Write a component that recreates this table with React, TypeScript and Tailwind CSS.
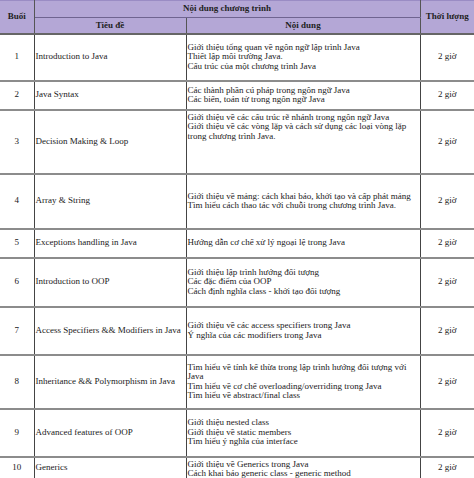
const lessons = [
  {
    no: '1',
    title: 'Introduction to Java',
    lines: [
      'Giới thiệu tổng quan về ngôn ngữ lập trình Java',
      'Thiết lập môi trường Java.',
      'Cấu trúc của một chương trình Java',
    ],
    h: 'h-[47px]',
  },
  {
    no: '2',
    title: 'Java Syntax',
    lines: ['Các thành phần cú pháp trong ngôn ngữ Java', 'Các biến, toán tử trong ngôn ngữ Java'],
    h: 'h-[29px]',
  },
  {
    no: '3',
    title: 'Decision Making & Loop',
    lines: [
      'Giới thiệu về các cấu trúc rẽ nhánh trong ngôn ngữ Java',
      'Giới thiệu về các vòng lặp và cách sử dụng các loại vòng lặp',
      'trong chương trình Java.',
    ],
    h: 'h-[64px]',
    top: true,
  },
  {
    no: '4',
    title: 'Array & String',
    lines: [
      'Giới thiệu về mảng: cách khai báo, khởi tạo và cấp phát mảng',
      'Tìm hiểu cách thao tác với chuỗi trong chương trình Java.',
    ],
    h: 'h-[55px]',
  },
  {
    no: '5',
    title: 'Exceptions handling in Java',
    lines: ['Hướng dẫn cơ chế xử lý ngoại lệ trong Java'],
    h: 'h-[29px]',
  },
  {
    no: '6',
    title: 'Introduction to OOP',
    lines: [
      'Giới thiệu lập trình hướng đối tượng',
      'Các đặc điểm của OOP',
      'Cách định nghĩa class - khởi tạo đối tượng',
    ],
    h: 'h-[49px]',
  },
  {
    no: '7',
    title: 'Access Specifiers && Modifiers in Java',
    lines: ['Giới thiệu về các access specifiers trong Java', 'Ý nghĩa của các modifiers trong Java'],
    h: 'h-[48px]',
  },
  {
    no: '8',
    title: 'Inheritance && Polymorphism in Java',
    lines: [
      'Tìm hiểu về tính kế thừa trong lập trình hướng đối tượng với',
      'Java',
      'Tìm hiểu về cơ chế overloading/overriding trong Java',
      'Tìm hiểu về abstract/final class',
    ],
    h: 'h-[54px]',
  },
  {
    no: '9',
    title: 'Advanced features of OOP',
    lines: ['Giới thiệu nested class', 'Giới thiệu về static members', 'Tìm hiểu ý nghĩa của interface'],
    h: 'h-[48px]',
  },
  {
    no: '10',
    title: 'Generics',
    lines: ['Giới thiệu về Generics trong Java', 'Cách khai báo generic class - generic method'],
    h: 'h-[22px]',
    top: true,
  },
];

export default function App() {
  return (
    <div className="w-[474px] h-[478px] overflow-hidden bg-white text-[#1a1a1a] font-['Liberation_Serif','Times_New_Roman',serif] text-[9px] leading-[9.5px]">
      <table className="w-[474px] table-fixed border-collapse">
        <colgroup>
          <col className="w-[34px]" />
          <col className="w-[152px]" />
          <col className="w-[234px]" />
          <col className="w-[54px]" />
        </colgroup>
        <thead className="bg-[#b4a7d6] font-bold text-[#222]">
          <tr className="h-[17px] border-t border-[#9a8cc4]">
            <th rowSpan={2} className="border-r border-b-2 border-[#555] border-b-[#666] align-middle">
              Buổi
            </th>
            <th colSpan={2} className="border-b border-[#6f6490] border-r border-r-[#555] align-middle">
              Nội dung chương trình
            </th>
            <th rowSpan={2} className="border-b-2 border-[#666] align-middle">
              Thời lượng
            </th>
          </tr>
          <tr className="h-[16px]">
            <th className="border-r border-b-2 border-[#555] border-b-[#666] align-middle">Tiêu đề</th>
            <th className="border-r border-b-2 border-[#555] border-b-[#666] align-middle">Nội dung</th>
          </tr>
        </thead>
        <tbody>
          {lessons.map((l) => (
            <tr key={l.no} className={`${l.h} border-b-2 border-[#8c8c8c]`}>
              <td className="border-r border-r-[#444] text-center align-middle">{l.no}</td>
              <td className="border-r border-r-[#444] pl-[1px] align-middle whitespace-nowrap">{l.title}</td>
              <td
                className={`border-r border-r-[#444] pl-[1px] whitespace-nowrap ${
                  l.top ? 'align-top pt-[2px]' : 'align-middle'
                }`}
              >
                {l.lines.map((line, i) => (
                  <div key={i}>{line}</div>
                ))}
              </td>
              <td className="text-center align-middle">2 giờ</td>
            </tr>
          ))}
        </tbody>
      </table>
    </div>
  );
}
